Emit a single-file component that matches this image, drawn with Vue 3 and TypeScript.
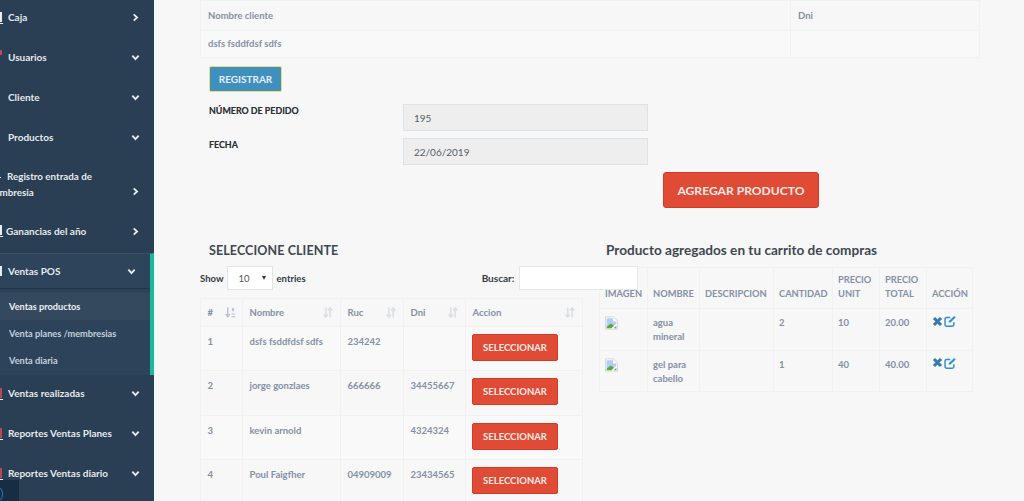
<script setup lang="ts">
interface Nav { label: string; open?: boolean; color: string; short?: boolean; mark?: boolean }
const before: Nav[] = [
  { label: 'Caja', color: '#e8edf2', mark: true },
  { label: 'Usuarios', open: true, color: '#b5485f', short: true },
  { label: 'Cliente', open: true, color: '' },
  { label: 'Productos', open: true, color: '' },
]
const after: Nav[] = [
  { label: 'Ventas realizadas', open: true, color: '#b5485f', mark: true },
  { label: 'Reportes Ventas Planes', open: true, color: '#b5485f', mark: true },
  { label: 'Reportes Ventas diario', open: true, color: '#b5485f', mark: true },
]
const clients = [
  ['1', 'dsfs fsddfdsf sdfs', '234242', ''],
  ['2', 'jorge gonzlaes', '666666', '34455667'],
  ['3', 'kevin arnold', '', '4324324'],
  ['4', 'Poul Faigfher', '04909009', '23434565'],
]
const cart = [
  { n: ['agua', 'mineral'], c: '2', u: '10', t: '20.00' },
  { n: ['gel para', 'cabello'], c: '1', u: '40', t: '40.00' },
]
</script>

<template>
  <div class="page">
    <aside class="side">
      <a v-for="i in before" :key="i.label" class="item">
        <i v-if="i.color" class="tick" :class="{ short: i.short, mark: i.mark }" :style="{ background: i.color }"></i>
        <span>{{ i.label }}</span>
        <svg class="chev" viewBox="0 0 10 10"><path :d="i.open ? 'M1.5 3 5 6.8 8.5 3' : 'M3 1.5 6.8 5 3 8.5'" /></svg>
      </a>
      <a class="item two">
        <span class="regtext"><b class="dot"></b>Registro entrada de<br /><span class="cut">membresia</span></span>
        <svg class="chev low" viewBox="0 0 10 10"><path d="M3 1.5 6.8 5 3 8.5" /></svg>
      </a>
      <a class="item gan">
        <i class="tick mark" style="background:#e8edf2"></i>
        <span class="tight">Ganancias del año</span>
        <svg class="chev" viewBox="0 0 10 10"><path d="M3 1.5 6.8 5 3 8.5" /></svg>
      </a>
      <div class="active">
        <a class="item head">
          <i class="tick" style="background:#e8edf2"></i>
          <span>Ventas POS</span>
          <svg class="chev" viewBox="0 0 10 10"><path d="M1.5 3 5 6.8 8.5 3" /></svg>
        </a>
        <div class="sub current">Ventas productos</div>
        <div class="sub">Venta planes /membresias</div>
        <div class="sub">Venta diaria</div>
      </div>
      <a v-for="i in after" :key="i.label" class="item">
        <i class="tick mark" :style="{ background: i.color }"></i>
        <span>{{ i.label }}</span>
        <svg class="chev" viewBox="0 0 10 10"><path d="M1.5 3 5 6.8 8.5 3" /></svg>
      </a>
      <div class="foot"><span class="ring"></span></div>
    </aside>

    <main class="main">
      <table class="tbl top">
        <colgroup><col style="width:590px" /><col style="width:189px" /></colgroup>
        <tbody>
          <tr class="r30"><td>Nombre cliente</td><td>Dni</td></tr>
          <tr class="r27"><td>dsfs fsddfdsf sdfs</td><td></td></tr>
        </tbody>
      </table>
      <button class="reg">REGISTRAR</button>
      <div class="field f1">
        <label>NÚMERO DE PEDIDO</label>
        <div class="ro">195</div>
      </div>
      <div class="field f2">
        <label>FECHA</label>
        <div class="ro">22/06/2019</div>
      </div>
      <div class="addrow"><button class="add">AGREGAR PRODUCTO</button></div>

      <div class="cols">
        <section class="left">
          <h3 class="h-client">SELECCIONE CLIENTE</h3>
          <div class="filters">
            <span>Show</span>
            <div class="sel"><span>10</span><i class="caret"></i></div>
            <span>entries</span>
            <span class="buscar">Buscar:</span>
            <div class="search"></div>
          </div>
          <table class="tbl clients">
            <colgroup><col style="width:42px" /><col style="width:98px" /><col style="width:63px" /><col style="width:62px" /><col style="width:117px" /></colgroup>
            <thead>
              <tr>
                <th v-for="(h, idx) in ['#', 'Nombre', 'Ruc', 'Dni', 'Accion']" :key="h">
                  <div class="thwrap">
                    <span>{{ h }}</span>
                    <svg v-if="idx === 0" class="sort on" viewBox="0 0 12 12">
                      <path d="M3 .5v10M.7 7.6 3 10.5l2.3-2.9" />
                      <path class="digits" d="M7.5 1h2.4v3.6H7.5zM7 7h4v1.2H7zM7 9.8h4V11.2H7z" />
                    </svg>
                    <svg v-else class="sort" viewBox="0 0 10 11">
                      <path d="M2.8.5v9.5M.7 7.6 2.8 10l2.1-2.4" />
                      <path d="M7.2 10.5V1M5.1 3.4 7.2 1l2.1 2.4" />
                    </svg>
                  </div>
                </th>
              </tr>
            </thead>
            <tbody>
              <tr v-for="c in clients" :key="c[0]">
                <td v-for="(v, k) in c" :key="k">{{ v }}</td>
                <td class="act"><button class="pick">SELECCIONAR</button></td>
              </tr>
            </tbody>
          </table>
        </section>

        <section class="right">
          <h3 class="h-cart">Producto agregados en tu carrito de compras</h3>
          <table class="tbl cart">
            <colgroup><col style="width:48px" /><col style="width:52px" /><col style="width:74px" /><col style="width:59px" /><col style="width:47px" /><col style="width:47px" /><col style="width:46px" /></colgroup>
            <thead>
              <tr>
                <th>IMAGEN</th><th>NOMBRE</th><th>DESCRIPCION</th><th>CANTIDAD</th>
                <th>PRECIO UNIT</th><th>PRECIO TOTAL</th><th>ACCIÓN</th>
              </tr>
            </thead>
            <tbody>
              <tr v-for="p in cart" :key="p.c">
                <td>
                  <svg class="broken" viewBox="0 0 16 16">
                    <path d="M.5.5h10l5 5v10H.5z" fill="#fff" stroke="#c9ccd2" />
                    <path d="M2 2h8v4h4v3L9 13H2z" fill="#b4cdf2" />
                    <path d="M2 14.5v-2l5-4 4 3-3 3z" fill="#5aa83f" />
                    <path d="M11 14.5l3-3v3z" fill="#5aa83f" />
                  </svg>
                </td>
                <td>{{ p.n[0] }}<br />{{ p.n[1] }}</td>
                <td></td>
                <td>{{ p.c }}</td>
                <td>{{ p.u }}</td>
                <td>{{ p.t }}</td>
                <td>
                  <span class="icons">
                    <svg viewBox="0 0 10 10" class="x"><path d="M1.8 1.8l6.4 6.4M8.2 1.8 1.8 8.2" /></svg>
                    <svg viewBox="0 0 12 12" class="edit">
                      <path d="M9.5 7v2.2a1.6 1.6 0 0 1-1.6 1.6H2.6A1.6 1.6 0 0 1 1 9.2V3.9a1.6 1.6 0 0 1 1.6-1.6H6" />
                      <path d="M4.5 5.9 9.8.9l1.4 1.4-5 5H4.5z" class="fill" />
                    </svg>
                  </span>
                </td>
              </tr>
            </tbody>
          </table>
        </section>
      </div>
    </main>
  </div>
</template>

<style>
html, body { margin: 0; height: 100%; overflow: hidden; background: #f7f7f7; }
</style>

<style scoped>
.page {
  display: flex;
  height: 501px;
  width: 1024px;
  overflow: hidden;
  font-family: "Lato", "Open Sans", sans-serif;
  font-size: 10px;
  color: #73879c;
  background: #f7f7f7;
}
.side {
  position: relative;
  flex: 0 0 154px;
  height: 501px;
  overflow: hidden;
  background: #2a3f54;
}
.item {
  position: relative;
  display: flex;
  align-items: center;
  box-sizing: border-box;
  height: 40px;
  padding-left: 8px;
  padding-right: 14px;
  color: #e7edf3;
  font-weight: 700;
  font-size: 10px;
  text-shadow: 0 0 1px rgba(0,0,0,.25);
}
.item span { flex: 1; white-space: nowrap; }
.side > .item:first-child { margin-top: -3px; }
.tick { position: absolute; left: 0; top: 15px; width: 1.5px; height: 10px; }
.tick.short { height: 5px; top: 13px; }
.tick.mark::after {
  content: "";
  position: absolute;
  left: 0;
  bottom: -2px;
  width: 3px;
  height: 1px;
  background: #e8edf2;
}
.chev { width: 9px; height: 9px; fill: none; stroke: #e7edf3; stroke-width: 2; flex: none; }
.two { height: 59px; align-items: flex-start; padding-top: 11px; line-height: 16px; font-size: 9.8px; }
.regtext { margin-left: -3px; }
.cut { margin-left: -19px; }
.dot { display: inline-block; width: 2px; height: 1px; background: #e7edf3; margin-left: -6px; margin-right: 6px; vertical-align: middle; }
.low { margin-top: 19px; }
.gan { height: 37px; padding-bottom: 7px; }
.gan .tight { margin-left: -2px; }
.gan .tick { top: 9px; }
.active {
  box-sizing: border-box;
  height: 122px;
  border-right: 4px solid #1abb9c;
  background: #2d435a;
  border-top: 1px solid #3a5066;
}
.head {
  height: 35px;
  padding-right: 14px;
  border-bottom: 1px solid #22364a;
  background: #2e445a;
}
.head .tick { top: 12px; }
.sub {
  height: 27px;
  line-height: 27px;
  padding-left: 9px;
  font-size: 9.2px;
  font-weight: 700;
  color: #c5d0da;
}
.sub.current { background: #35495e; color: #eef2f6; margin-top: 4px; }
.active + .item { margin-top: -2px; }
.foot {
  position: absolute;
  left: 0;
  bottom: 0;
  width: 19px;
  height: 21px;
  background: #172d44;
  overflow: hidden;
}
.ring {
  position: absolute;
  left: -4px;
  top: 8px;
  width: 5px;
  height: 10px;
  border: 1.5px solid #2a7fc0;
  border-radius: 50%;
}
.main {
  flex: 1;
  box-sizing: border-box;
  padding-left: 46px;
  min-width: 0;
}
.tbl {
  border-collapse: collapse;
  table-layout: fixed;
  font-size: 9.5px;
  font-weight: 700;
  color: #8490a5;
}
.tbl td, .tbl th { border: 1px solid #f1f1f1; }
.top { width: 779px; }
.top td { padding: 0 7px; }
.r30 { height: 30px; }
.r27 { height: 27px; background: #f9f9f9; }
.r27 td { padding-bottom: 2px; }
.reg {
  display: block;
  box-sizing: border-box;
  margin: 8px 0 0 9px;
  width: 73px;
  height: 26px;
  border: 1px solid #e8de7a;
  border-radius: 2px;
  background: #3f8fbf;
  color: #e4f0f8;
  font: 700 10px "Lato", sans-serif;
  padding: 0;
}
.field { display: flex; margin-left: 9px; }
.field label {
  width: 194px;
  color: #2a2f36;
  font-weight: 700;
  font-size: 8.9px;
  padding-top: 1px;
  text-shadow: 0 0 .5px rgba(0,0,0,.4);
}
.ro {
  box-sizing: border-box;
  width: 245px;
  height: 27px;
  line-height: 26px;
  padding-left: 10px;
  background: #eeeeee;
  border: 1px solid #dde2e8;
  color: #555d66;
  font-size: 10px;
  font-weight: 400;
}
.f1 { margin-top: 12px; }
.f2 { margin-top: 7px; }
.addrow { margin-top: 7px; margin-left: 463px; }
.add {
  width: 156px;
  height: 36px;
  border: 1px solid #d73925;
  border-radius: 3px;
  background: #e04b35;
  color: #fbe9e6;
  font: 700 12.1px "Lato", sans-serif;
  padding: 0;
}
.cols { display: flex; margin-top: 28px; }
.left { width: 399px; flex: none; }
.right { flex: none; }
h3 { margin: 0; color: #3f4750; font-weight: 700; }
.h-client { font-size: 12.5px; letter-spacing: .1px; margin-left: 9px; line-height: 16px; padding-top: 7px; }
.filters {
  position: relative;
  z-index: 1;
  display: flex;
  align-items: center;
  height: 24px;
  margin-top: 7px;
  color: #333b44;
  font-weight: 700;
  font-size: 9.5px;
  white-space: nowrap;
}
.filters > * { flex: none; }
.sel {
  position: relative;
  box-sizing: border-box;
  width: 46px;
  height: 24px;
  margin: 0 4px 0 3px;
  background: #fff;
  border: 1px solid #dfe3ea;
  font-weight: 400;
  color: #555;
  line-height: 24px;
  padding-left: 11px;
}
.caret {
  position: absolute;
  right: 6px;
  top: 9px;
  border-left: 2.5px solid transparent;
  border-right: 2.5px solid transparent;
  border-top: 4px solid #333;
}
.buscar { margin-left: 176px; margin-right: 5px; font-size: 10px; }
.search {
  box-sizing: border-box;
  width: 119px;
  height: 24px;
  background: #fff;
  border: 1px solid #e4e7ec;
}
.clients { width: 382px; margin-top: 8px; }
.clients th { height: 27px; padding: 0 7px 0 6.5px; text-align: left; font-weight: 700; }
.clients td { height: 44.4px; padding: 9px 6.5px 0; vertical-align: top; box-sizing: border-box; }
.clients td.act { padding: 7px 6px 0; }
.clients tbody tr:nth-child(odd) { background: #f9f9f9; }
.thwrap { display: flex; justify-content: space-between; align-items: center; }
.sort { width: 10px; height: 11px; fill: none; stroke: #dcdfe4; stroke-width: 1.7; flex: none; }
.sort.on { width: 11px; stroke: #bcc5d2; margin-right: -1px; }
.sort .digits { fill: #bcc5d2; stroke: none; }
.pick {
  display: block;
  width: 86px;
  height: 27px;
  border: 1px solid #d73925;
  border-radius: 2px;
  background: #e04b35;
  color: #fbe9e6;
  font: 700 9.5px "Lato", sans-serif;
  padding: 0;
}
.h-cart { font-size: 13.6px; font-weight: 700; margin-left: 7px; line-height: 16px; padding-top: 6px; }
.cart { width: 373px; margin-top: 9px; }
.cart th {
  height: 41px;
  padding: 0 2px 7px 5px;
  vertical-align: bottom;
  text-align: left;
  font-size: 9.3px;
  font-weight: 700;
  line-height: 14px;
  box-sizing: border-box;
}
.cart td { height: 41.5px; vertical-align: top; padding: 7px 5px 0; line-height: 14px; box-sizing: border-box; }
.broken { display: block; width: 13px; height: 14px; }
.icons { display: flex; gap: 1px; align-items: center; margin-top: -1px; }
.icons .x { width: 11px; height: 11px; fill: none; stroke: #337ab7; stroke-width: 2.8; }
.icons .edit { width: 12.5px; height: 12.5px; fill: none; stroke: #2f8ed8; stroke-width: 1.4; }
.icons .fill { fill: #2f8ed8; stroke: none; }
</style>
